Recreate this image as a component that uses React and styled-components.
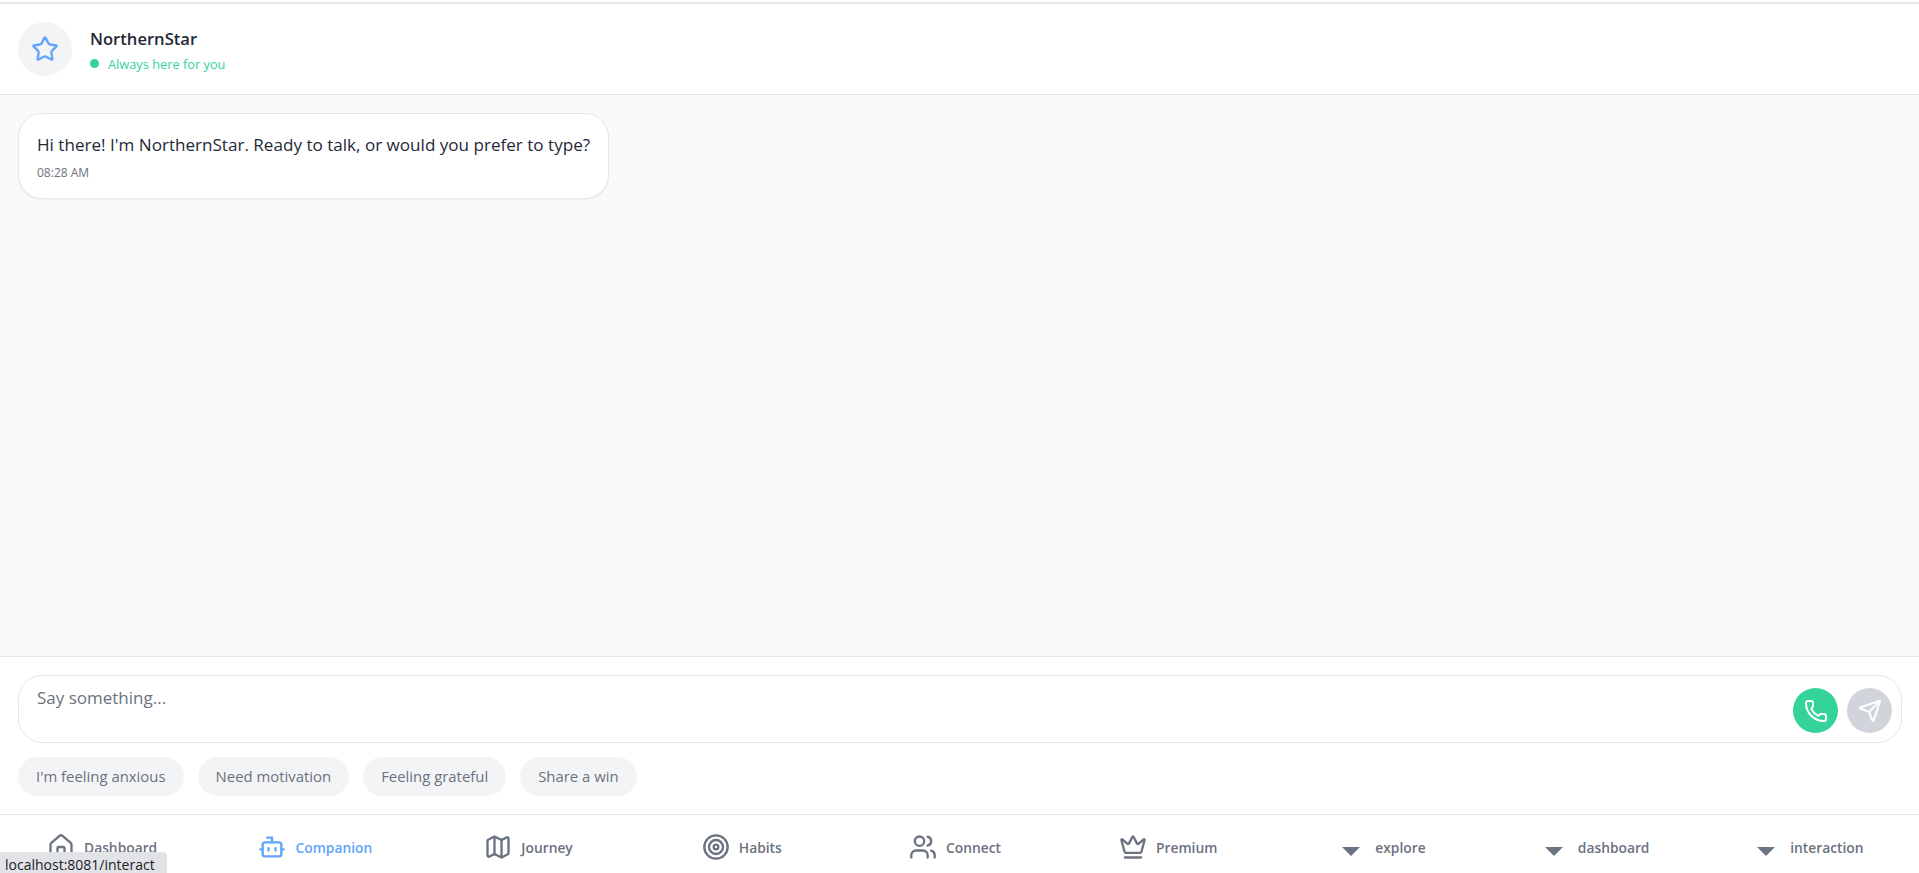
import React from 'react';
import styled, { createGlobalStyle } from 'styled-components';
import { Star, Phone, Send, House, Bot, Map, Target, Users, Crown } from 'lucide-react';

const GlobalStyle = createGlobalStyle`
    html, body {
        margin: 0;
        height: 100%;
        background: #fff;
        font-family: "Open Sans", "Liberation Sans", sans-serif;
    }
    * { box-sizing: border-box; }
`;

const Page = styled.div`
    height: 100vh;
    display: flex;
    flex-direction: column;
    overflow: hidden;
    padding-top: 2px;
`;

const Header = styled.header`
    height: 93px;
    flex-shrink: 0;
    border-top: 2px solid #e5e7eb;
    border-bottom: 1px solid #e5e7eb;
    display: flex;
    align-items: center;
    gap: 18px;
    padding: 0 18px;
`;

const Avatar = styled.div`
    width: 54px;
    height: 54px;
    border-radius: 50%;
    background: #f3f4f6;
    color: #60a5fa;
    display: flex;
    align-items: center;
    justify-content: center;
`;

const HeaderText = styled.div`
    padding-top: 2px;
`;

const Name = styled.div`
    font-size: 16.6px;
    font-weight: 600;
    line-height: 24px;
    color: #1f2937;
`;

const Status = styled.div`
    display: flex;
    align-items: center;
    gap: 9px;
    font-size: 12.8px;
    line-height: 20px;
    margin-top: 3px;
    color: #34d399;
`;

const Dot = styled.span`
    width: 9px;
    height: 9px;
    border-radius: 50%;
    background: #34d399;
`;

const Messages = styled.main`
    flex: 1;
    background: #f9fafb;
    padding: 18px;
`;

const Bubble = styled.div`
    width: fit-content;
    background: #fff;
    border: 1px solid #e5e7eb;
    border-radius: 24px;
    box-shadow: 0 1px 2px rgba(0, 0, 0, 0.05);
    padding: 19px 18px 17px;
`;

const BubbleText = styled.div`
    font-size: 17.08px;
    line-height: 24px;
    color: #1f2937;
`;

const Time = styled.div`
    font-size: 12px;
    line-height: 16px;
    margin-top: 8px;
    color: #6b7280;
`;

const Composer = styled.section`
    flex-shrink: 0;
    border-top: 1px solid #e5e7eb;
    padding: 18px 17px 18px 18px;
`;

const InputBox = styled.div`
    height: 68px;
    border: 1px solid #e5e7eb;
    border-radius: 24px;
    display: flex;
    gap: 9px;
    padding: 12px 9px 0 18px;
`;

const Placeholder = styled.div`
    flex: 1;
    margin-top: -2px;
    font-size: 17px;
    line-height: 24px;
    color: #6b7280;
`;

const RoundButton = styled.button`
    width: 45px;
    height: 45px;
    border: 0;
    padding: 0;
    border-radius: 50%;
    color: #fff;
    background: ${props => props.$bg};
    display: flex;
    align-items: center;
    justify-content: center;
`;

const Chips = styled.div`
    display: flex;
    gap: 14px;
    margin-top: 14px;
`;

const Chip = styled.button`
    height: 39px;
    border: 0;
    border-radius: 20px;
    padding: 0 18px 1px;
    background: #f3f4f6;
    color: #6b7280;
    font-family: inherit;
    font-size: 14.9px;
`;

const Nav = styled.nav`
    height: 59px;
    flex-shrink: 0;
    border-top: 1px solid #e5e7eb;
    padding-top: 6px;
    display: grid;
    grid-template-columns: repeat(9, 1fr);
`;

const NavItem = styled.a`
    display: flex;
    align-items: center;
    justify-content: center;
    gap: ${props => (props.$plain ? 15 : 9)}px;
    padding-right: ${props => (props.$plain ? 4 : 9)}px;
    font-size: 13.8px;
    font-weight: 600;
    color: ${props => (props.$active ? '#60a5fa' : '#6b7280')};
`;

const Triangle = styled.span`
    width: 0;
    height: 0;
    margin-top: 8px;
    border-left: 9px solid transparent;
    border-right: 9px solid transparent;
    border-top: 9px solid #6b7280;
`;

const StatusBar = styled.div`
    position: fixed;
    left: 0;
    bottom: 0;
    width: 167px;
    height: 21px;
    background: #e2e3e7;
    border-top-right-radius: 4px;
    padding: 2px 0 0 5px;
    font-size: 14px;
    line-height: 21px;
    color: #202124;
    white-space: nowrap;
    overflow: hidden;
`;

const navLinks = [
    { label: 'Dashboard', Icon: House },
    { label: 'Companion', Icon: Bot, active: true },
    { label: 'Journey', Icon: Map },
    { label: 'Habits', Icon: Target },
    { label: 'Connect', Icon: Users },
    { label: 'Premium', Icon: Crown },
    { label: 'explore' },
    { label: 'dashboard' },
    { label: 'interaction' },
];

const prompts = ["I'm feeling anxious", 'Need motivation', 'Feeling grateful', 'Share a win'];

const App = () => {
    return (
        <Page>
            <GlobalStyle />
            <Header>
                <Avatar><Star size={28} strokeWidth={2} /></Avatar>
                <HeaderText>
                    <Name>NorthernStar</Name>
                    <Status><Dot />Always here for you</Status>
                </HeaderText>
            </Header>
            <Messages>
                <Bubble>
                    <BubbleText>Hi there! I'm NorthernStar. Ready to talk, or would you prefer to type?</BubbleText>
                    <Time>08:28 AM</Time>
                </Bubble>
            </Messages>
            <Composer>
                <InputBox>
                    <Placeholder>Say something...</Placeholder>
                    <RoundButton $bg="#34d399"><Phone size={24} /></RoundButton>
                    <RoundButton $bg="#d1d5db"><Send size={24} /></RoundButton>
                </InputBox>
                <Chips>
                    {prompts.map(text => <Chip key={text}>{text}</Chip>)}
                </Chips>
            </Composer>
            <Nav>
                {navLinks.map(({ label, Icon, active }) => (
                    <NavItem key={label} $active={active} $plain={!Icon}>
                        {Icon ? <Icon size={28} /> : <Triangle />}
                        {label}
                    </NavItem>
                ))}
            </Nav>
            <StatusBar>localhost:8081/interact</StatusBar>
        </Page>
    );
};

export default App;
